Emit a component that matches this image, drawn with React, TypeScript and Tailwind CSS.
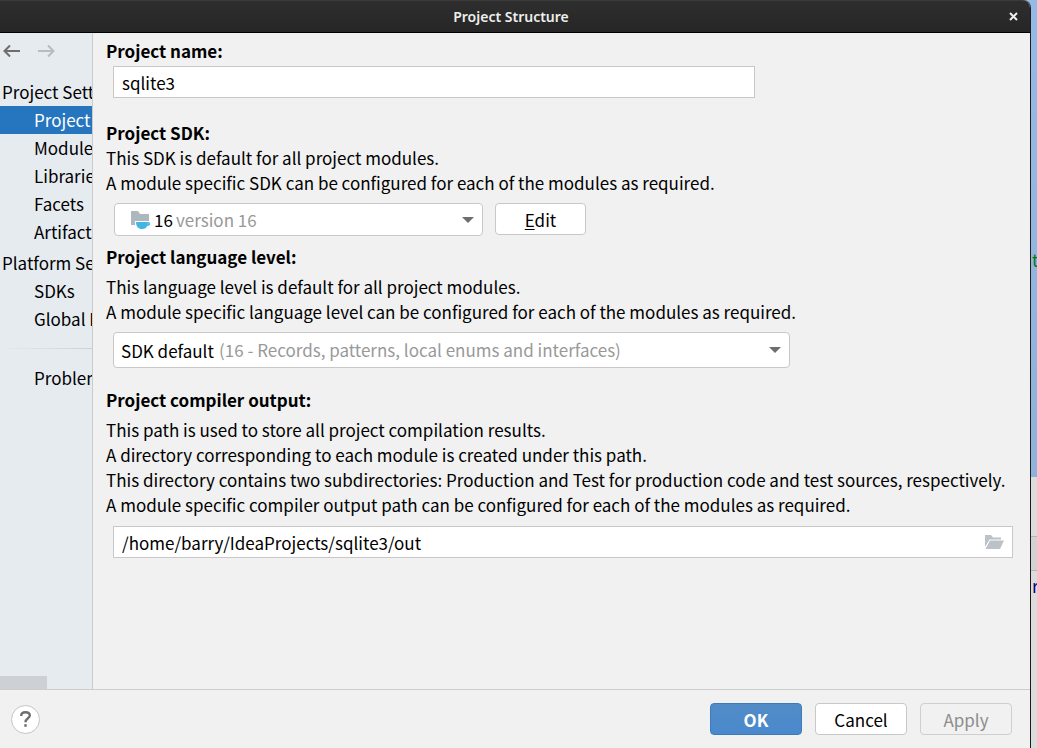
import React, { useState } from 'react';

const projectItems = ['Project', 'Modules', 'Libraries', 'Facets', 'Artifacts'];
const platformItems = ['SDKs', 'Global Libraries'];

interface NavItemProps {
  label: string;
  selected: boolean;
  onSelect: (label: string) => void;
}

function NavItem({ label, selected, onSelect }: NavItemProps) {
  return (
    <li>
      <button
        type="button"
        onClick={() => onSelect(label)}
        className={
          selected
            ? 'block h-7 w-full bg-[#2675bf] pl-[34px] text-left whitespace-nowrap text-white'
            : 'block h-7 w-full pl-[34px] text-left whitespace-nowrap'
        }
      >
        {label}
      </button>
    </li>
  );
}

function Sidebar() {
  const [selected, setSelected] = useState('Project');

  return (
    <nav className="flex w-[93px] shrink-0 flex-col overflow-hidden border-r border-[#c9cccf] bg-[#e6ebf0] leading-7">
      <div className="flex h-9 items-center gap-[18px] pl-[3px]">
        <button type="button" aria-label="Back">
          <svg width="17" height="14" viewBox="0 0 17 14" fill="none" stroke="#6e6e6e" strokeWidth="2">
            <path d="M17 7H2M7 1.5L1.5 7L7 12.5" />
          </svg>
        </button>
        <button type="button" aria-label="Forward" disabled>
          <svg width="17" height="14" viewBox="0 0 17 14" fill="none" stroke="#b9bbbd" strokeWidth="2">
            <path d="M0 7H15M10 1.5L15.5 7L10 12.5" />
          </svg>
        </button>
      </div>

      <h2 className="mt-[9px] h-7 pl-[2px] whitespace-nowrap">Project Settings</h2>
      <ul>
        {projectItems.map((item) => (
          <NavItem key={item} label={item} selected={item === selected} onSelect={setSelected} />
        ))}
      </ul>
      <h2 className="mt-[3px] h-7 pl-[2px] whitespace-nowrap">Platform Settings</h2>
      <ul>
        {platformItems.map((item) => (
          <NavItem key={item} label={item} selected={item === selected} onSelect={setSelected} />
        ))}
      </ul>
      <div className="mt-[15px] h-px shrink-0 bg-gradient-to-r from-[#e6ebf0] to-[#cdd1d4]" />
      <ul className="mt-[15px]">
        <NavItem label="Problems" selected={selected === 'Problems'} onSelect={setSelected} />
      </ul>
      <div className="mt-auto h-[13px] w-[47px] shrink-0 bg-[#cdd0d4]" />
    </nav>
  );
}

function Caret() {
  return (
    <svg
      width="12"
      height="6"
      viewBox="0 0 12 6"
      className="pointer-events-none absolute top-1/2 right-[9px] -translate-y-1/2"
    >
      <path d="M0 0H12L6 6Z" fill="#6e6e6e" />
    </svg>
  );
}

function SdkIcon() {
  return (
    <svg
      width="20"
      height="18"
      viewBox="0 0 20 18"
      className="pointer-events-none absolute top-1/2 left-[17px] -translate-y-1/2"
    >
      <path d="M0 0H7L9 3H18V10H4V14H0Z" fill="#adb7be" />
      <path
        d="M5 11H17C20 11 20 15 16 15C15.5 17 14 18 11 18C7.5 18 5 15.5 5 11Z"
        fill="#40b6e0"
      />
      <path d="M16.500 12.500H17.700L16.500 13.600Z" fill="#fff" />
    </svg>
  );
}

function Footer() {
  return (
    <footer className="flex h-[59px] shrink-0 items-center border-t border-[#cdcdcd] pr-[18px] pl-[11px]">
      <button
        type="button"
        aria-label="Help"
        className="flex size-[29px] items-center justify-center rounded-full border border-[#c4c4c4] bg-white"
      >
        <svg width="11" height="16" viewBox="0 0 11 16" fill="none" stroke="#6e6e6e" strokeWidth="2.4">
          <path d="M1.2 5C1.2 2.5 3 1.2 5.500 1.2S9.8 2.6 9.8 4.6C9.8 7.2 5.5 7.5 5.5 11.2" />
          <path d="M5.5 13.2V15.8" />
        </svg>
      </button>
      <div className="ml-auto flex gap-[13px]">
        <button
          type="button"
          className="h-8 w-[92px] rounded border border-[#3f7ab9] bg-gradient-to-b from-[#528cc7] to-[#4989cc] font-bold text-white"
        >
          OK
        </button>
        <button type="button" className="h-8 w-[92px] rounded border border-[#c8c8c8] bg-white">
          Cancel
        </button>
        <button type="button" disabled className="h-8 w-[92px] rounded border border-[#cfcfcf] text-[#8c8c8c]">
          Apply
        </button>
      </div>
    </footer>
  );
}

export default function App() {
  const [name, setName] = useState('sqlite3');
  const [output, setOutput] = useState('/home/barry/IdeaProjects/sqlite3/out');

  return (
    <div className="flex h-screen overflow-hidden bg-[linear-gradient(#94bbe6_0px,#8fb2da_477px,#dcdcdc_477px)] font-['Noto_Sans_CJK_SC',sans-serif] text-[17px] leading-[25px] text-black">
      <div className="flex min-w-0 flex-1 flex-col overflow-hidden rounded-tr-lg border-r border-[#1d1d1d] bg-[#f1f1f1]">
        <header className="relative flex h-[33px] shrink-0 items-center justify-center border-t border-b border-t-[#3b3b3b] border-b-black bg-gradient-to-b from-[#2e2e2e] to-[#262626] pr-2">
          <h1 className="font-['Noto_Sans',sans-serif] text-[14px] leading-5 font-semibold text-[#eeeeec]">
            Project Structure
          </h1>
          <button type="button" aria-label="Close" className="absolute top-[11px] right-3">
            <svg width="9" height="9" viewBox="0 0 9 9" stroke="#eeeeec" strokeWidth="2">
              <path d="M1 1L8 8M8 1L1 8" />
            </svg>
          </button>
        </header>

        <div className="flex min-h-0 flex-1">
          <Sidebar />

          <main className="min-w-0 flex-1 pt-[5px] pr-[17px] pl-[13px]">
            <label htmlFor="project-name" className="block font-bold">
              Project name:
            </label>
            <div className="mt-[3px] ml-[7px]">
              <input
                id="project-name"
                value={name}
                onChange={(e) => setName(e.target.value)}
                className="block h-8 w-full max-w-[642px] border border-[#c8c8c8] bg-white px-2 outline-none"
              />
            </div>

            <label htmlFor="project-sdk" className="mt-[22px] block font-bold">
              Project SDK:
            </label>
            <p>This SDK is default for all project modules.</p>
            <p>A module specific SDK can be configured for each of the modules as required.</p>
            <div className="mt-2 ml-2 flex gap-3">
              <div className="relative w-[369px]">
                <select
                  id="project-sdk"
                  className="block h-[33px] w-full appearance-none rounded border border-[#c8c8c8] bg-white pl-[39px] outline-none"
                >
                  <option>16</option>
                </select>
                <SdkIcon />
                <span className="pointer-events-none absolute top-1 left-[62px] text-[#999999]">version 16</span>
                <Caret />
              </div>
              <button type="button" className="h-8 w-[91px] rounded border border-[#c8c8c8] bg-white">
                <span className="underline underline-offset-2">E</span>dit
              </button>
            </div>

            <label htmlFor="language-level" className="mt-2 block font-bold">
              Project language level:
            </label>
            <p className="mt-[5px]">This language level is default for all project modules.</p>
            <p>A module specific language level can be configured for each of the modules as required.</p>
            <div className="relative mt-2 ml-[7px] max-w-[677px]">
              <select
                id="language-level"
                className="block h-9 w-full appearance-none rounded border border-[#c8c8c8] bg-white pl-[7px] outline-none"
              >
                <option>SDK default</option>
              </select>
              <span className="pointer-events-none absolute top-[5px] left-[106px] text-[#999999]">
                (16 - Records, patterns, local enums and interfaces)
              </span>
              <Caret />
            </div>

            <label htmlFor="compiler-output" className="mt-[19px] block font-bold">
              Project compiler output:
            </label>
            <div className="mt-[5px]">
              <p>This path is used to store all project compilation results.</p>
              <p>A directory corresponding to each module is created under this path.</p>
              <p className="whitespace-nowrap">
                This directory contains two subdirectories: Production and Test for production code and test sources,
                respectively.
              </p>
              <p>A module specific compiler output path can be configured for each of the modules as required.</p>
            </div>
            <div className="mt-[9px] ml-[7px] flex h-8 items-center border border-[#c8c8c8] bg-white px-2">
              <input
                id="compiler-output"
                value={output}
                onChange={(e) => setOutput(e.target.value)}
                className="min-w-0 flex-1 outline-none"
              />
              <button type="button" aria-label="Browse">
                <svg width="19" height="14" viewBox="0 0 19 14" fill="#bcc2c7">
                  <path d="M0 0H6L8 2.5H16V4.5H4.5L0 12Z" />
                  <path d="M5 5.5H19L15 14H0.5Z" />
                </svg>
              </button>
            </div>
          </main>
        </div>

        <Footer />
      </div>

      {/* sliver of the editor window behind the dialog */}
      <div className="flex w-[6px] shrink-0 flex-col overflow-hidden">
        <span className="mt-[247px] pl-px text-[#007a10]">t</span>
        <div className="mt-[264px] h-[35px] shrink-0 border-y border-[#b5b5b5] bg-[#d2d2d2]" />
        <span className="mt-[2px] pl-px text-[#000080]">r</span>
      </div>
    </div>
  );
}
